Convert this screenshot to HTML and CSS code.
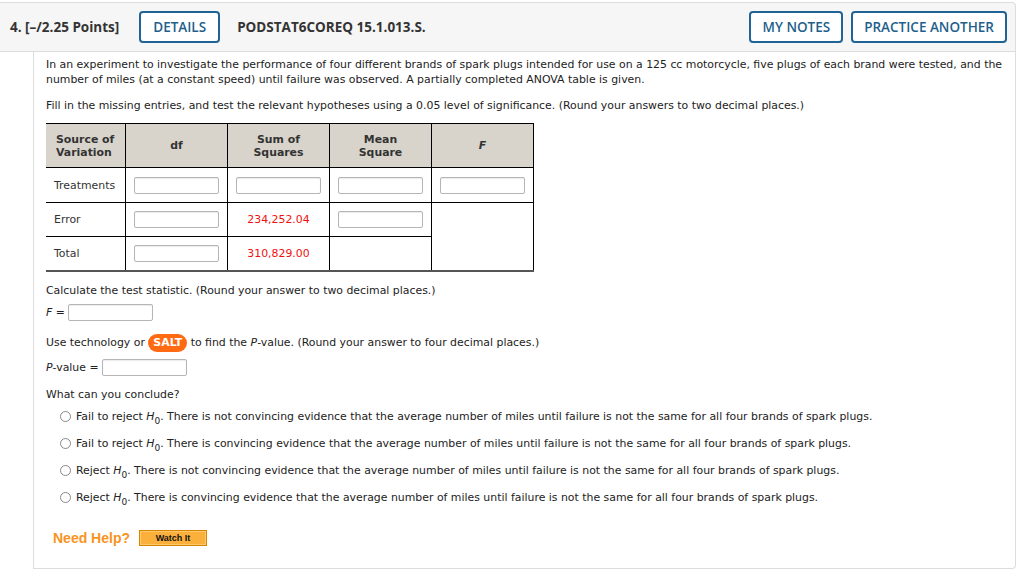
FILE: index.html
```html
<!DOCTYPE html>
<html lang="en">
<head>
  <meta charset="UTF-8">
  <title>Question 4</title>
  <link rel="stylesheet" href="styles.css">
</head>
<body>
  <div class="question">
    <div class="q-head">
      <span class="q-num">4. [–/2.25 Points]</span>
      <button class="btn">DETAILS</button>
      <span class="q-code">PODSTAT6COREQ 15.1.013.S.</span>
      <div class="q-actions">
        <button class="btn">MY NOTES</button>
        <button class="btn">PRACTICE ANOTHER</button>
      </div>
    </div>
    <div class="q-body">
      <p>In an experiment to investigate the performance of four different brands of spark plugs intended for use on a 125 cc motorcycle, five plugs of each brand were tested, and the number of miles (at a constant speed) until failure was observed. A partially completed ANOVA table is given.</p>
      <p class="fill">Fill in the missing entries, and test the relevant hypotheses using a 0.05 level of significance. (Round your answers to two decimal places.)</p>
      <table class="anova">
        <tr>
          <th class="src">Source of<br>Variation</th>
          <th>df</th>
          <th>Sum of<br>Squares</th>
          <th>Mean<br>Square</th>
          <th><i>F</i></th>
        </tr>
        <tr class="first">
          <td class="src">Treatments</td>
          <td><input class="box" type="text"></td>
          <td><input class="box" type="text"></td>
          <td><input class="box" type="text"></td>
          <td><input class="box" type="text"></td>
        </tr>
        <tr>
          <td class="src">Error</td>
          <td><input class="box" type="text"></td>
          <td class="given">234,252.04</td>
          <td><input class="box" type="text"></td>
          <td rowspan="2"></td>
        </tr>
        <tr>
          <td class="src">Total</td>
          <td><input class="box" type="text"></td>
          <td class="given">310,829.00</td>
          <td></td>
        </tr>
      </table>
      <p class="calc">Calculate the test statistic. (Round your answer to two decimal places.)</p>
      <div class="answer f-row"><i>F</i>&nbsp;= <input class="box" type="text"></div>
      <p class="tech">Use technology or <span class="salt">SALT</span> to find the <i>P</i>-value. (Round your answer to four decimal places.)</p>
      <div class="answer p-row"><span><i>P</i>-value =&nbsp;</span><input class="box" type="text"></div>
      <p class="ask">What can you conclude?</p>
      <ul class="choices">
        <li><span class="radio"></span>Fail to reject <i>H</i><sub>0</sub>. There is not convincing evidence that the average number of miles until failure is not the same for all four brands of spark plugs.</li>
        <li><span class="radio"></span>Fail to reject <i>H</i><sub>0</sub>. There is convincing evidence that the average number of miles until failure is not the same for all four brands of spark plugs.</li>
        <li><span class="radio"></span>Reject <i>H</i><sub>0</sub>. There is not convincing evidence that the average number of miles until failure is not the same for all four brands of spark plugs.</li>
        <li><span class="radio"></span>Reject <i>H</i><sub>0</sub>. There is convincing evidence that the average number of miles until failure is not the same for all four brands of spark plugs.</li>
      </ul>
      <div class="help">
        <span class="help-label">Need Help?</span>
        <button class="watch">Watch It</button>
      </div>
    </div>
  </div>
</body>
</html>
```

FILE: styles.css
```css
body {
  margin: 0;
  padding-top: 2px;
  background: #fff;
  font-family: "DejaVu Sans", Verdana, sans-serif;
  font-size: 10.9px;
  color: #222;
}
.question {
  width: 1016px;
}
.q-head {
  display: flex;
  align-items: center;
  height: 48px;
  padding: 0 8px 0 10px;
  background: #f6f6f6;
  border: 1px solid #ddd;
  border-left: none;
  border-radius: 0 4px 0 0;
  font-family: "Open Sans", sans-serif;
  font-size: 13.5px;
  font-weight: 700;
  color: #333;
}
.q-num { margin-right: 20px; }
.q-code { margin-left: 17px; }
.q-actions {
  margin-left: auto;
  display: flex;
  gap: 8px;
}
.btn {
  height: 32px;
  padding: 0 12px;
  background: #fff;
  border: 2px solid #1f6494;
  border-radius: 4px;
  font-family: "Open Sans", sans-serif;
  font-size: 13.5px;
  font-weight: 600;
  color: #1f5f8b;
}
.q-actions .btn { padding: 0 11px; }
.q-body {
  margin-left: 33px;
  padding: 5px 12px 22px;
  border: 1px solid #ddd;
  border-top: none;
  border-radius: 0 0 4px 0;
  line-height: 15px;
}
.q-body p {
  margin: 0 0 11px;
}
.q-body .fill { margin-bottom: 10px; }
.box {
  box-sizing: border-box;
  width: 85px;
  height: 17px;
  margin: 0;
  border: 1px solid #b5b5b5;
  border-radius: 2px;
  box-shadow: inset 0 1px 1px rgba(0,0,0,.08);
  vertical-align: middle;
}
.anova {
  border-collapse: collapse;
  border-bottom: 2px solid #555;
}
.anova th,
.anova td {
  border: 1px solid #000;
  padding: 0 8px;
  text-align: center;
}
.anova th {
  width: 85px;
  height: 43px;
  background: #d8d4cb;
  color: #333;
  font-weight: 700;
  line-height: 13px;
}
.anova td { height: 33px; }
.anova .first td { height: 34px; }
.anova .src {
  width: 61px;
  border-left: none;
  text-align: left;
}
.anova th.src { padding-left: 10px; }
.anova td.src { padding-left: 8px; color: #333; }
.given { color: #f01010; }
.q-body .calc { margin: 11px 0 6px; }
.answer {
  display: flex;
  align-items: center;
  height: 17px;
}
.f-row .box { margin-left: 3px; }
.q-body .tech {
  margin: 13px 0 7px;
  line-height: 18px;
}
.salt {
  display: inline-block;
  height: 18px;
  padding: 0 5px;
  background: #ff6a13;
  border-radius: 9px;
  color: #fff;
  font-weight: 700;
  vertical-align: top;
}
.q-body .ask { margin: 11px 0 7px; }
.choices {
  list-style: none;
  margin: 0;
  padding: 0 0 0 14px;
}
.choices li {
  margin-bottom: 12px;
}
.choices sub {
  font-size: 9px;
  line-height: 0;
  vertical-align: -4px;
}
.radio {
  display: inline-block;
  box-sizing: border-box;
  width: 11px;
  height: 11px;
  margin-right: 5px;
  border: 1px solid #888;
  border-radius: 50%;
  background: #fff;
  vertical-align: -2px;
}
.help {
  display: flex;
  align-items: center;
  margin: 25px 0 0 7px;
  gap: 9px;
}
.help-label {
  font-family: "Liberation Sans", Arial, sans-serif;
  font-size: 14px;
  font-weight: 700;
  color: #f7941d;
}
.watch {
  width: 68px;
  height: 16px;
  padding: 0;
  background: #fbb03b;
  border: 1px solid #d98400;
  box-shadow: inset 0 0 0 1px #fcc86a;
  font-family: "Liberation Sans", Arial, sans-serif;
  font-size: 9px;
  font-weight: 700;
  color: #111;
}
```
